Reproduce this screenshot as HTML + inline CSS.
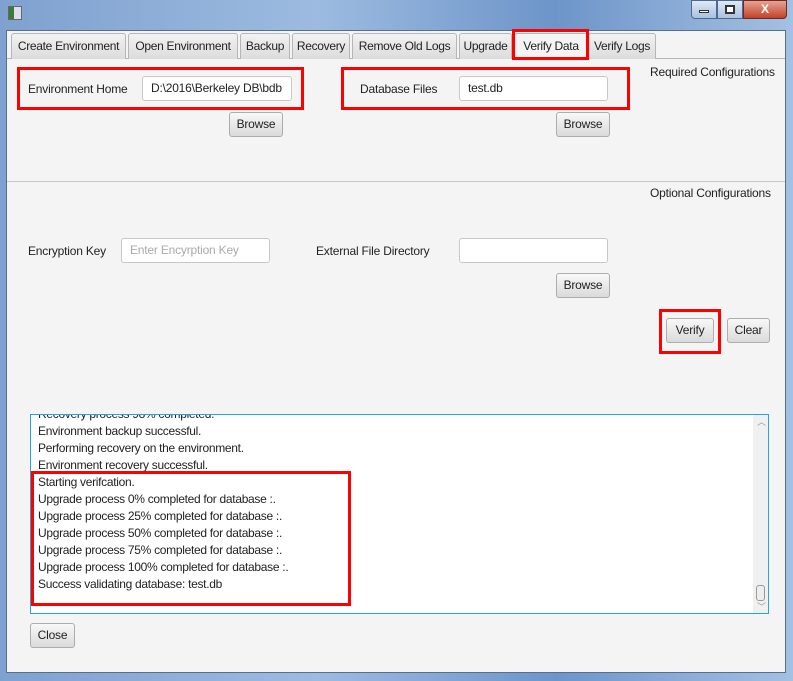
<!DOCTYPE html>
<html><head><style>
*{box-sizing:border-box}
body{margin:0;width:793px;height:681px;overflow:hidden;font-family:"Liberation Sans",sans-serif;font-size:12px;color:#222;position:relative;background:linear-gradient(90deg,#7fa1cf,#9dbbe0 40%,#6d95c9 70%,#a4c0e2);}
.a{position:absolute}
.client{left:6px;top:30px;width:780px;height:643px;background:#f4f4f4;border:1px solid #55708f}
.tab{position:absolute;top:33px;height:26px;background:linear-gradient(#f2f2f2,#dcdcdc);border:1px solid #b6b6b6;border-bottom:none;border-radius:3px 3px 0 0;text-align:center;line-height:25px;font-size:12px;letter-spacing:-0.3px;white-space:nowrap}
.red{position:absolute;border:3px solid #f00}
.inp{position:absolute;background:#fff;border:1px solid #c8c8c8;border-radius:3px;height:25px;line-height:23px;padding-left:8px;letter-spacing:-0.2px}
.btn{position:absolute;background:linear-gradient(#f8f8f8,#dadada);border:1px solid #adadad;border-radius:3px;height:25px;line-height:23px;text-align:center;letter-spacing:-0.2px}
.lbl{position:absolute;letter-spacing:-0.2px}
.log div{height:17px;line-height:17px;letter-spacing:-0.3px}
</style></head><body>
<div class="a" style="left:8px;top:6px;width:14px;height:14px;background:linear-gradient(90deg,#3a7a3a 40%,#dde 40%);border:1px solid #666"></div>
<div class="a" style="left:691px;top:0;width:98px;height:20px;">
<div class="a" style="left:0;top:0;width:26px;height:19px;background:linear-gradient(#dfe9f5,#a9c1df);border:1px solid #4b6a91;border-radius:0 0 0 4px"></div>
<div class="a" style="left:26px;top:0;width:26px;height:19px;background:linear-gradient(#dfe9f5,#a9c1df);border:1px solid #4b6a91"></div>
<div class="a" style="left:52px;top:0;width:44px;height:19px;background:linear-gradient(#e8a393,#c1432a);border:1px solid #6b2b22;border-radius:0 0 4px 0;color:#fff;font-weight:bold;text-align:center;line-height:17px">X</div>
<div class="a" style="left:8px;top:10px;width:10px;height:3px;background:#fff;border:1px solid #333"></div>
<div class="a" style="left:34px;top:5px;width:10px;height:9px;border:2px solid #333;background:#fff"></div>
</div>
<div class="a client"></div>
<div class="a" style="left:7px;top:58px;width:778px;height:1px;background:#b6b6b6"></div>
<div class="tab" style="left:11px;width:115px">Create Environment</div>
<div class="tab" style="left:128px;width:110px">Open Environment</div>
<div class="tab" style="left:240px;width:50px">Backup</div>
<div class="tab" style="left:292px;width:58px">Recovery</div>
<div class="tab" style="left:352px;width:105px">Remove Old Logs</div>
<div class="tab" style="left:459px;width:53px">Upgrade</div>
<div class="tab" style="left:514px;width:74px;background:#f4f4f4;height:27px">Verify Data</div>
<div class="tab" style="left:588px;width:68px">Verify Logs</div>
<div class="red" style="left:512px;top:29px;width:77px;height:31px"></div>

<div class="lbl" style="left:650px;top:65px">Required Configurations</div>
<div class="lbl" style="left:28px;top:82px">Environment Home</div>
<div class="inp" style="left:142px;top:76px;width:150px">D:\2016\Berkeley DB\bdb</div>
<div class="red" style="left:17px;top:67px;width:287px;height:43px"></div>
<div class="lbl" style="left:360px;top:82px">Database Files</div>
<div class="inp" style="left:459px;top:76px;width:149px">test.db</div>
<div class="red" style="left:341px;top:67px;width:289px;height:43px"></div>
<div class="btn" style="left:229px;top:112px;width:54px">Browse</div>
<div class="btn" style="left:556px;top:112px;width:54px">Browse</div>

<div class="a" style="left:7px;top:181px;width:778px;height:1px;background:#c8c8c8"></div>
<div class="lbl" style="left:650px;top:186px">Optional Configurations</div>
<div class="lbl" style="left:28px;top:244px">Encryption Key</div>
<div class="inp" style="left:121px;top:238px;width:149px;color:#aaa">Enter Encyrption Key</div>
<div class="lbl" style="left:316px;top:244px">External File Directory</div>
<div class="inp" style="left:459px;top:238px;width:149px"></div>
<div class="btn" style="left:556px;top:273px;width:54px">Browse</div>
<div class="btn" style="left:666px;top:318px;width:48px">Verify</div>
<div class="btn" style="left:727px;top:318px;width:43px">Clear</div>
<div class="red" style="left:659px;top:309px;width:62px;height:45px"></div>

<div class="a" style="left:30px;top:414px;width:739px;height:200px;background:#fff;border:1px solid #29a3dc;overflow:hidden">
<div class="log a" style="left:7px;top:-9px">
<div>Recovery process 98% completed.</div>
<div>Environment backup successful.</div>
<div>Performing recovery on the environment.</div>
<div>Environment recovery successful.</div>
<div>Starting verifcation.</div>
<div>Upgrade process 0% completed for database :.</div>
<div>Upgrade process 25% completed for database :.</div>
<div>Upgrade process 50% completed for database :.</div>
<div>Upgrade process 75% completed for database :.</div>
<div>Upgrade process 100% completed for database :.</div>
<div>Success validating database: test.db</div>
</div>
<div class="a" style="left:722px;top:0;width:16px;height:198px;background:#f0f0f0"></div>
<div class="a" style="left:725px;top:170px;width:9px;height:16px;border:1px solid #999;border-radius:3px;background:#eee"></div>
<div class="a" style="left:726px;top:0;color:#999;font-size:9px">︿</div>
<div class="a" style="left:726px;top:185px;color:#999;font-size:9px">﹀</div>
</div>
<div class="red" style="left:31px;top:471px;width:320px;height:135px"></div>
<div class="btn" style="left:30px;top:623px;width:45px;height:25px">Close</div>
</body></html>
